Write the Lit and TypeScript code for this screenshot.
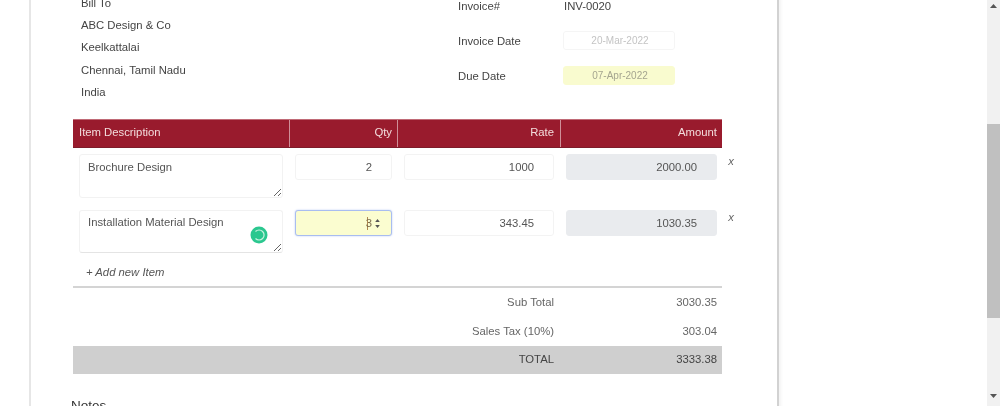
import { LitElement, html, css } from "lit";
import { customElement } from "lit/decorators.js";

@customElement("app-root")
export class AppRoot extends LitElement {
  static styles = css`
    :host { display: block; height: 406px; overflow: hidden; background: #fff; font-family: "Liberation Sans", Arial, sans-serif; font-size: 11.3px; color: #555; }
    * { box-sizing: border-box; }
    .page { display: flex; height: 406px; filter: blur(0.35px); }
    .main { flex: 1; padding-left: 29px; }
    .card { width: 750px; height: 460px; margin-top: -12px; padding: 0 55px 0 42px; border-left: 2px solid #e6e6e6; border-right: 2px solid #d2d2d2; box-shadow: 2px 0 3px rgba(0,0,0,.05); }
    .top { display: flex; height: 131px; color: #444; }
    .bill { width: 385px; padding: 4px 0 0 8px; line-height: 22.2px; }
    .meta { display: grid; grid-template-columns: 105px 112px; grid-auto-rows: 35px; align-items: center; }
    .date { height: 19px; padding-left: 2px; text-align: center; line-height: 18px; font-size: 10px; color: #c4c4c4; border: 1px solid #f5f5f5; border-radius: 3px; }
    .date.due { background: #f9fbcf; border-color: #f9fbcf; color: #a5a590; }
    .value { padding-left: 1px; }
    .cols { display: grid; grid-template-columns: 216px 108px 163px 162px; }
    .head { height: 29px; background: #991b2d; color: #f3dcdc; align-items: center; border-top: 1px solid #c06a76; border-bottom: 1px solid #7e1c2a; }
    .head div { height: 100%; line-height: 25px; padding-right: 5px; text-align: right; border-left: 1px solid #cf8f98; }
    .head div:first-child { text-align: left; padding-left: 6px; border-left: 0; }
    .head div:nth-child(3) { padding-right: 6px; }
    .row { position: relative; padding-top: 6px; }
    .row.first { height: 56px; }
    .row.second { height: 50px; }
    .desc { display: block; margin-left: 6px; width: 204px; height: 44px; padding: 4px 8px; font: inherit; color: #555; border: 1px solid #f2f2f2; border-radius: 3px; outline: none; line-height: 16px; }
    .second .desc { height: 43px; padding-top: 3px; border-bottom-color: #e4e4e4; }
    .in { display: block; height: 26px; font: inherit; color: #555; text-align: right; padding: 0 19px 0 4px; border: 1px solid #f3f3f3; border-radius: 3px; outline: none; background: #fff; }
    .qty { margin-left: 6px; width: 97px; }
    .rate { margin-left: 7px; width: 150px; }
    .amt { margin-left: 6px; width: 151px; background: #e9ebee; border-color: #e9ebee; }
    .focus { display: flex; align-items: center; justify-content: flex-end; padding: 0 11px 0 0; background: #fbfdd0; border: 1px solid #a9bdf0; box-shadow: 0 0 2px #b8c8f4; color: #7a6a4a; }
    .caret { width: 1px; height: 13px; background: #b08a50; margin-right: -2px; }
    .spin { display: block; margin-left: 3px; }
    .x { position: absolute; right: -12px; top: 7px; font-style: italic; font-size: 11.3px; color: #666; }
    .loader { position: absolute; left: 177px; top: 22px; width: 18px; height: 18px; }
    .add { height: 34px; border-bottom: 2px solid #d4d4d4; font-style: italic; padding: 12px 0 0 13px; color: #555; }
    .sum { height: 29px; padding-bottom: 2px; align-items: center; color: #666; }
    .sum div { text-align: right; padding-right: 5px; }
    .sum .span { padding-right: 6px; grid-column: 1 / 4; }
    .sum.total { height: 28px; background: #cfcfcf; color: #444; }
    .notes { margin: 24px 0 0 -2px; font-size: 13.5px; color: #333; }
    .bar { width: 13px; background: #f1f1f1; display: flex; flex-direction: column; align-items: center; padding-top: 4px; }
    .bar svg { display: block; }
    .thumb { width: 13px; height: 194px; margin-top: 116px; background: #c0c0c0; }
    .bar .down { margin-top: 76px; }
  `;

  render() {
    return html`
      <div class="page">
        <div class="main">
          <div class="card">
            <div class="top">
              <div class="bill">
                <div>Bill To</div>
                <div>ABC Design &amp; Co</div>
                <div>Keelkattalai</div>
                <div>Chennai, Tamil Nadu</div>
                <div>India</div>
              </div>
              <div class="meta">
                <div>Invoice#</div><div class="value">INV-0020</div>
                <div>Invoice Date</div><div class="date">20-Mar-2022</div>
                <div>Due Date</div><div class="date due">07-Apr-2022</div>
              </div>
            </div>
            <div class="cols head">
              <div>Item Description</div><div>Qty</div><div>Rate</div><div>Amount</div>
            </div>
            <div class="cols row first">
              <textarea class="desc" readonly>Brochure Design</textarea>
              <input class="in qty" readonly value="2" />
              <input class="in rate" readonly value="1000" />
              <input class="in amt" readonly value="2000.00" />
              <span class="x">x</span>
            </div>
            <div class="cols row second">
              <textarea class="desc" readonly>Installation Material Design</textarea>
              <div class="in qty focus">
                <span class="caret"></span><span>3</span>
                <svg class="spin" width="5" height="11" viewBox="0 0 5 11"><path d="M2.5 1 L4.8 4 H.2 Z M2.5 10 L4.8 7 H.2 Z" fill="#555"/></svg>
              </div>
              <input class="in rate" readonly value="343.45" />
              <input class="in amt" readonly value="1030.35" />
              <span class="x">x</span>
              <svg class="loader" viewBox="0 0 18 18">
                <circle cx="9" cy="9" r="8.5" fill="#2bc78f"/>
                <path d="M5.5 5.5 A5 5 0 1 1 5.5 12.5" fill="none" stroke="#c8f2e0" stroke-width="1.2"/>
              </svg>
            </div>
            <div class="add">+ Add new Item</div>
            <div class="cols sum"><div class="span">Sub Total</div><div>3030.35</div></div>
            <div class="cols sum"><div class="span">Sales Tax (10%)</div><div>303.04</div></div>
            <div class="cols sum total"><div class="span">TOTAL</div><div>3333.38</div></div>
            <div class="notes">Notes</div>
          </div>
        </div>
        <div class="bar">
          <svg width="7" height="4" viewBox="0 0 7 4"><path d="M3.5 0 L7 4 H0 Z" fill="#555"/></svg>
          <div class="thumb"></div>
          <svg class="down" width="7" height="4" viewBox="0 0 7 4"><path d="M3.5 4 L7 0 H0 Z" fill="#555"/></svg>
        </div>
      </div>
    `;
  }
}
